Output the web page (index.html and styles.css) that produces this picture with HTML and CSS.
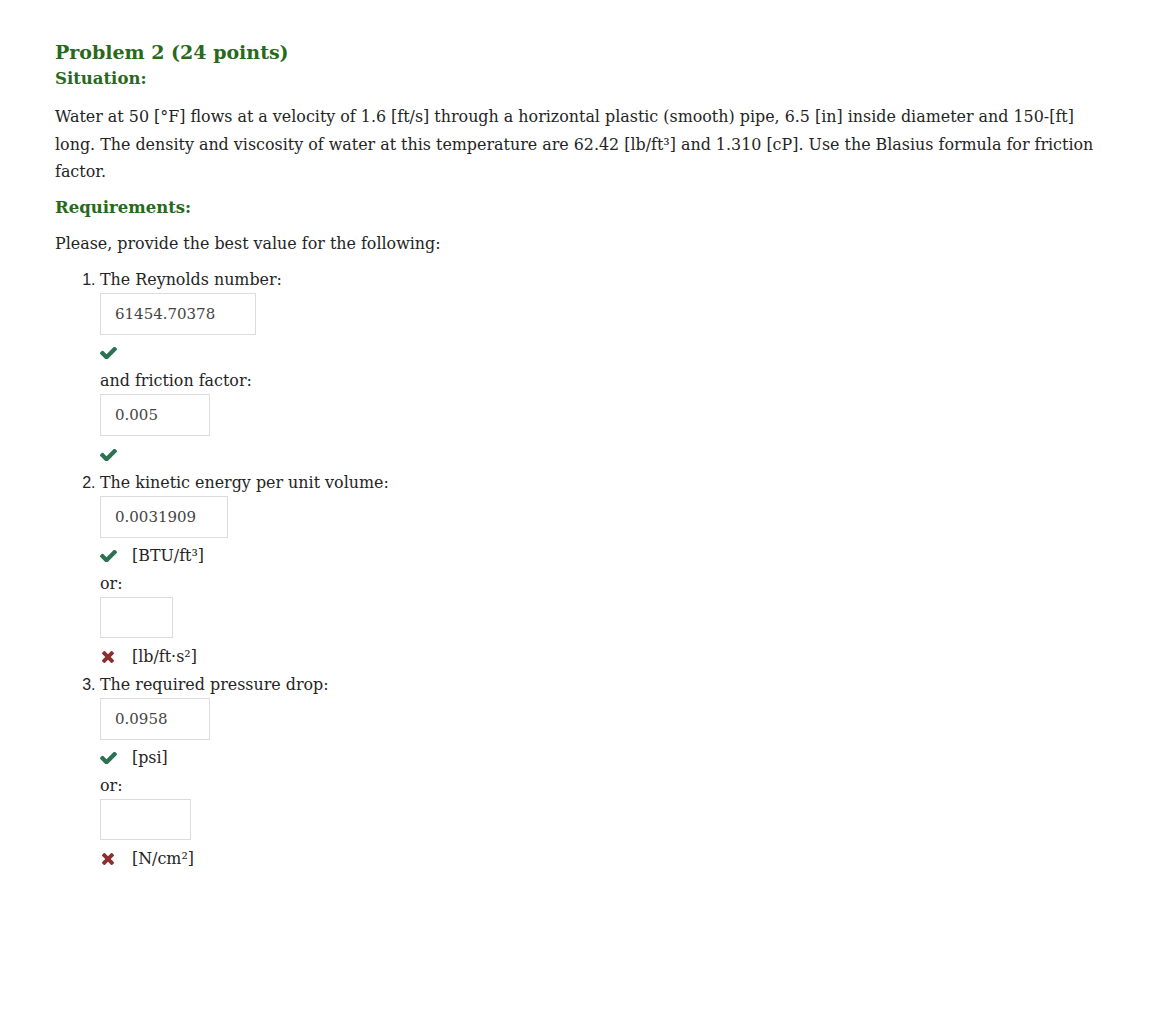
FILE: index.html
```html
<!DOCTYPE html>
<html lang="en">
<head>
<meta charset="utf-8">
<title>Problem 2</title>
<link rel="stylesheet" href="styles.css">
</head>
<body>
<div class="page">
  <h1 class="title">Problem 2 (24 points)</h1>
  <h2 class="sub">Situation:</h2>
  <p class="para">Water at 50 [°F] flows at a velocity of 1.6 [ft/s] through a horizontal plastic (smooth) pipe, 6.5 [in] inside diameter and 150-[ft] long. The density and viscosity of water at this temperature are 62.42 [lb/ft³] and 1.310 [cP]. Use the Blasius formula for friction factor.</p>
  <h2 class="sub req">Requirements:</h2>
  <p class="lead">Please, provide the best value for the following:</p>
  <ol class="items">
    <li class="item">
      <div class="label">The Reynolds number:</div>
      <div class="box w156">61454.70378</div>
      <div class="fb"><span class="ic"><svg class="check" viewBox="121 370 1550 1060"><path d="M1671 566q0 40-28 68l-724 724-136 136q-28 28-68 28t-68-28l-136-136-362-362q-28-28-28-68t28-68l136-136q28-28 68-28t68 28l294 295 656-657q28-28 68-28t68 28l136 136q28 28 28 68z"/></svg></span></div>
      <div class="label">and friction factor:</div>
      <div class="box w110">0.005</div>
      <div class="fb"><span class="ic"><svg class="check" viewBox="121 370 1550 1060"><path d="M1671 566q0 40-28 68l-724 724-136 136q-28 28-68 28t-68-28l-136-136-362-362q-28-28-28-68t28-68l136-136q28-28 68-28t68 28l294 295 656-657q28-28 68-28t68 28l136 136q28 28 28 68z"/></svg></span></div>
    </li>
    <li class="item">
      <div class="label">The kinetic energy per unit volume:</div>
      <div class="box w128">0.0031909</div>
      <div class="fb"><span class="ic"><svg class="check" viewBox="121 370 1550 1060"><path d="M1671 566q0 40-28 68l-724 724-136 136q-28 28-68 28t-68-28l-136-136-362-362q-28-28-28-68t28-68l136-136q28-28 68-28t68 28l294 295 656-657q28-28 68-28t68 28l136 136q28 28 28 68z"/></svg></span><span class="unit">[BTU/ft³]</span></div>
      <div class="label">or:</div>
      <div class="box w73"></div>
      <div class="fb"><span class="ic"><svg class="cross" viewBox="110 376 1188 1150"><path d="M1298 1322q0 40-28 68l-136 136q-28 28-68 28t-68-28l-294-294-294 294q-28 28-68 28t-68-28l-136-136q-28-28-28-68t28-68l294-294-294-294q-28-28-28-68t28-68l136-136q28-28 68-28t68 28l294 294 294-294q28-28 68-28t68 28l136 136q28 28 28 68t-28 68l-294 294 294 294q28 28 28 68z"/></svg></span><span class="unit">[lb/ft·s²]</span></div>
    </li>
    <li class="item">
      <div class="label">The required pressure drop:</div>
      <div class="box w110">0.0958</div>
      <div class="fb"><span class="ic"><svg class="check" viewBox="121 370 1550 1060"><path d="M1671 566q0 40-28 68l-724 724-136 136q-28 28-68 28t-68-28l-136-136-362-362q-28-28-28-68t28-68l136-136q28-28 68-28t68 28l294 295 656-657q28-28 68-28t68 28l136 136q28 28 28 68z"/></svg></span><span class="unit">[psi]</span></div>
      <div class="label">or:</div>
      <div class="box w91"></div>
      <div class="fb"><span class="ic"><svg class="cross" viewBox="110 376 1188 1150"><path d="M1298 1322q0 40-28 68l-136 136q-28 28-68 28t-68-28l-294-294-294 294q-28 28-68 28t-68-28l-136-136q-28-28-28-68t28-68l294-294-294-294q-28-28-28-68t28-68l136-136q28-28 68-28t68 28l294 294 294-294q28-28 68-28t68 28l136 136q28 28 28 68t-28 68l-294 294 294 294q28 28 28 68z"/></svg></span><span class="unit">[N/cm²]</span></div>
    </li>
  </ol>
</div>
</body>
</html>
```

FILE: styles.css
```css
html, body {
  margin: 0;
  padding: 0;
  background: #ffffff;
}

body {
  font-family: "DejaVu Serif", "Liberation Serif", serif;
  font-size: 15.9px;
  color: #242424;
}

.page {
  padding: 38px 0 0 55px;
  width: 1045px;
}

.title {
  margin: 0;
  font-size: 19px;
  line-height: 28px;
  font-weight: bold;
  color: #28691c;
}

.sub {
  margin: 0;
  font-size: 16.5px;
  line-height: 26px;
  font-weight: bold;
  color: #28691c;
}

.para {
  margin: 11px 0 0;
  line-height: 27.5px;
}

.req {
  margin-top: 9px;
}

.lead {
  margin: 9px 0 0;
  line-height: 27px;
}

.items {
  margin: 10px 0 0;
  padding: 0 0 0 45px;
}

.item::marker {
  font-family: "Liberation Sans", Arial, sans-serif;
  font-size: 16px;
}

.label {
  line-height: 26px;
}

.box {
  box-sizing: border-box;
  height: 42px;
  border: 1px solid #dcdcdc;
  padding: 0 14px;
  display: flex;
  align-items: center;
  font-size: 15px;
  color: #444;
}

.w156 { width: 156px; }
.w110 { width: 110px; }
.w128 { width: 128px; }
.w73 { width: 73px; height: 41px; }
.w91 { width: 91px; height: 41px; }

.fb {
  height: 33.5px;
  display: flex;
  align-items: center;
  padding-top: 4px;
  box-sizing: border-box;
}

.ic {
  width: 32px;
  display: flex;
  align-items: center;
}

.check {
  width: 17px;
  height: 12px;
  fill: #2a7252;
}

.cross {
  width: 12px;
  height: 12px;
  margin-left: 2px;
  fill: #8c2f2f;
}

.unit {
  line-height: 20px;
}
```
